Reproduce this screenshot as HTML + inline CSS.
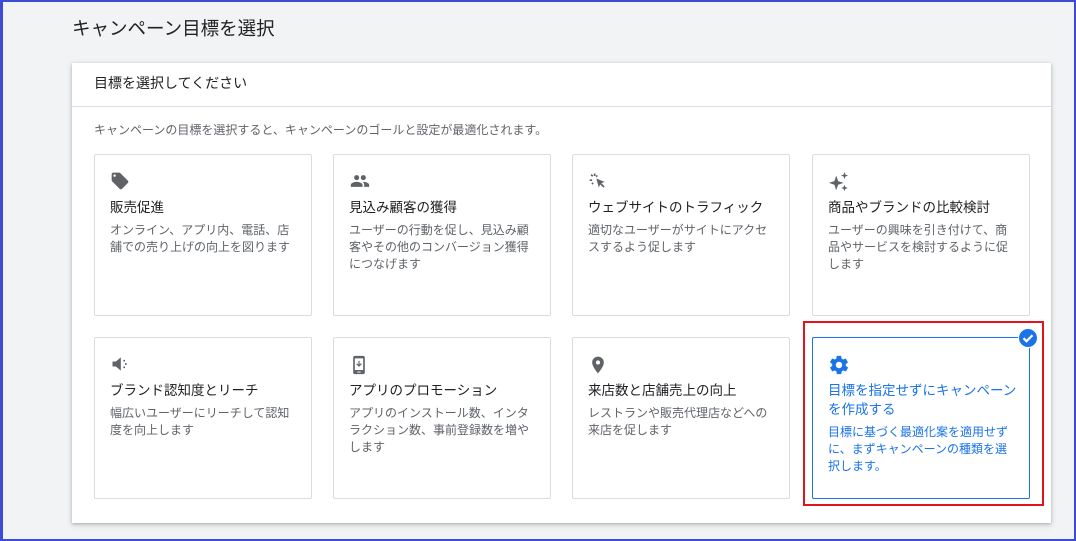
<!DOCTYPE html>
<html><head><meta charset="utf-8"><style>
*{margin:0;padding:0;box-sizing:border-box}
body{width:1076px;height:541px;background:#f1f3f4;font-family:"Liberation Sans","Noto Sans CJK JP",sans-serif;position:relative;overflow:hidden;color:#202124}
.frame{position:absolute;left:0;top:0;width:1076px;height:541px;border:2px solid #3c4bd6;border-left-width:3px;pointer-events:none;z-index:10}
h1{position:absolute;left:72px;top:15px;font-size:18.5px;font-weight:normal;color:#202124}
.card{position:absolute;left:72px;top:63px;width:979px;height:460px;background:#fff;box-shadow:0 1px 3px rgba(60,64,67,.3),0 2px 6px rgba(60,64,67,.15)}
.hd{position:absolute;left:22px;top:10px;font-size:14px}
.div{position:absolute;left:0;top:43px;width:100%;height:1px;background:#dadce0}
.sub{position:absolute;left:22px;top:58px;font-size:12px;color:#5f6368}
.t{position:absolute;width:218px;height:162px;border:1px solid #dadce0;border-radius:2px;padding:0 15px}
.t svg{position:absolute;left:15px;top:16px}
.t .ti{position:absolute;left:15px;top:43px;font-size:13.5px;color:#202124;width:190px;line-height:19px}
.t .d{position:absolute;left:15px;top:67px;font-size:12px;color:#5f6368;line-height:17px;width:182px}
.sel{border:1px solid #1a73e8}
.sel .ti,.sel .d{color:#1a73e8}
.red{position:absolute;left:803px;top:321px;width:241px;height:185px;border:2px solid #e3131e}
</style></head><body>
<div class="frame"></div>
<h1>キャンペーン目標を選択</h1>
<div class="card">
<div class="hd">目標を選択してください</div>
<div class="div"></div>
<div class="sub">キャンペーンの目標を選択すると、キャンペーンのゴールと設定が最適化されます。</div>
</div>
<div class="t" style="left:94px;top:154px"><svg width="20" height="20" viewBox="0 0 24 24"><path fill="#5f6368" d="M21.4 11.6l-9-9C12 2.2 11.5 2 11 2H4c-1.1 0-2 .9-2 2v7c0 .6.2 1.1.6 1.4l9 9c.4.4.9.6 1.4.6s1-.2 1.4-.6l7-7c.4-.4.6-.9.6-1.4s-.2-1-.6-1.4zM5.5 7C4.7 7 4 6.3 4 5.5S4.7 4 5.5 4 7 4.7 7 5.5 6.3 7 5.5 7z"/></svg><div class="ti">販売促進</div><div class="d">オンライン、アプリ内、電話、店舗での売り上げの向上を図ります</div></div>
<div class="t" style="left:333px;top:154px"><svg width="22" height="20" viewBox="0 0 24 24"><path fill="#5f6368" d="M16 11c1.7 0 3-1.3 3-3s-1.3-3-3-3-3 1.3-3 3 1.3 3 3 3zm-8 0c1.7 0 3-1.3 3-3S9.7 5 8 5 5 6.3 5 8s1.3 3 3 3zm0 2c-2.3 0-7 1.2-7 3.5V19h14v-2.5C15 14.2 10.3 13 8 13zm8 0c-.3 0-.6 0-1 .1 1.2.8 2 1.9 2 3.4V19h6v-2.5c0-2.3-4.7-3.5-7-3.5z"/></svg><div class="ti">見込み顧客の獲得</div><div class="d">ユーザーの行動を促し、見込み顧客やその他のコンバージョン獲得につなげます</div></div>
<div class="t" style="left:572px;top:154px"><svg width="20" height="20" viewBox="0 0 24 24"><path fill="#5f6368" d="M10 9l10 4-4 1.5 4 4-1.5 1.5-4-4L13 20z"/><path fill="#5f6368" d="M7 3h2v3H7zM2 10h3v2H2zM3 5l1.4-1.4 2 2L5 7zM10.5 4.6l1.4 1.4-1.5 1.5L9 6.1zM4 15l1.5-1.5 1.4 1.4-1.5 1.5z"/></svg><div class="ti">ウェブサイトのトラフィック</div><div class="d">適切なユーザーがサイトにアクセスするよう促します</div></div>
<div class="t" style="left:812px;top:154px"><svg width="22" height="22" viewBox="0 0 24 24"><path fill="#5f6368" d="M9 5l2 6 6 2-6 2-2 6-2-6-6-2 6-2zM18 1l1 3 3 1-3 1-1 3-1-3-3-1 3-1zM18 15l1 2.5 2.5 1-2.5 1L18 22l-1-2.5-2.5-1 2.5-1z"/></svg><div class="ti">商品やブランドの比較検討</div><div class="d">ユーザーの興味を引き付けて、商品やサービスを検討するように促します</div></div>
<div class="t" style="left:94px;top:337px"><svg width="20" height="20" viewBox="0 0 24 24"><path fill="#5f6368" d="M3 9h4l6-5v16l-6-5H3z"/><path fill="#5f6368" d="M16 7h2v2h-2zM18 11h2v2h-2zM16 15h2v2h-2z"/></svg><div class="ti">ブランド認知度とリーチ</div><div class="d">幅広いユーザーにリーチして認知度を向上します</div></div>
<div class="t" style="left:333px;top:337px"><svg width="20" height="22" viewBox="0 0 24 24"><path fill="#5f6368" d="M17 1H7C5.9 1 5 1.9 5 3v18c0 1.1.9 2 2 2h10c1.1 0 2-.9 2-2V3c0-1.1-.9-2-2-2zm0 17H7V4h10v14zM10 20h4v1h-4z"/><path fill="#5f6368" d="M11.3 7h1.4v4.5l1.6-1.6 1 1L12 14.2 8.7 10.9l1-1 1.6 1.6z"/></svg><div class="ti">アプリのプロモーション</div><div class="d">アプリのインストール数、インタラクション数、事前登録数を増やします</div></div>
<div class="t" style="left:572px;top:337px"><svg width="20" height="22" viewBox="0 0 24 24"><path fill="#5f6368" d="M12 2C8.1 2 5 5.1 5 9c0 5.2 7 13 7 13s7-7.8 7-13c0-3.9-3.1-7-7-7zm0 9.5c-1.4 0-2.5-1.1-2.5-2.5s1.1-2.5 2.5-2.5 2.5 1.1 2.5 2.5-1.1 2.5-2.5 2.5z"/></svg><div class="ti">来店数と店舗売上の向上</div><div class="d">レストランや販売代理店などへの来店を促します</div></div>
<div class="t sel" style="left:812px;top:337px"><svg width="22" height="22" viewBox="0 0 24 24"><path fill="#1a73e8" d="M19.4 13c.04-.3.06-.6.06-1s-.02-.7-.06-1l2.1-1.6c.2-.15.25-.4.12-.6l-2-3.5c-.12-.2-.37-.3-.6-.2l-2.5 1c-.5-.4-1.1-.7-1.700-1l-.4-2.6C14.4 2.2 14.2 2 14 2h-4c-.25 0-.45.2-.5.4l-.4 2.6c-.6.25-1.2.6-1.700 1l-2.500-1c-.2-.1-.5 0-.6.2l-2 3.5c-.13.2-.07.45.12.6L4.6 11c-.04.3-.06.7-.06 1s.02.7.06 1l-2.1 1.6c-.2.15-.25.4-.12.6l2 3.5c.12.2.37.3.6.2l2.5-1c.5.4 1.1.7 1.7 1l.4 2.6c.05.25.25.4.5.4h4c.25 0 .45-.2.5-.4l.4-2.6c.6-.25 1.2-.6 1.7-1l2.5 1c.2.1.5 0 .6-.2l2-3.5c.13-.2.07-.45-.12-.6L19.4 13zM12 15.5c-1.9 0-3.5-1.6-3.5-3.5s1.6-3.5 3.5-3.5 3.5 1.6 3.5 3.5-1.6 3.5-3.5 3.5z"/></svg><div class="ti" style="top:43px">目標を指定せずにキャンペーンを作成する</div><div class="d" style="top:86px;color:#1a73e8">目標に基づく最適化案を適用せずに、まずキャンペーンの種類を選択します。</div></div>
<svg style="position:absolute;left:1018px;top:328px" width="20" height="20" viewBox="0 0 20 20"><circle cx="10" cy="10" r="9.5" fill="#1a73e8" stroke="#fff" stroke-width="1"/><path d="M5.5 10.2l3 3 6-6" stroke="#fff" stroke-width="2.2" fill="none"/></svg>
<div class="red"></div>
</body></html>
